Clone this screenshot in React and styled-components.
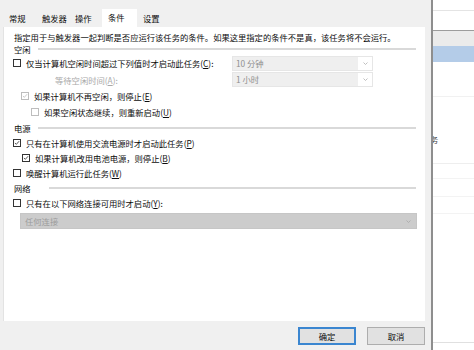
import styled, { createGlobalStyle } from 'styled-components'

const GlobalStyle = createGlobalStyle`
  html, body {
    margin: 0;
    padding: 0;
    background: #ffffff;
  }
  body {
    font-family: "Noto Sans CJK SC", "Noto Sans", sans-serif;
    font-size: 8.3px;
    color: #0c0c0c;
  }
`

const Check = ({ checked, disabled }) => (
    <Box $disabled={disabled}>
        {checked && (
            <svg width="8" height="8" viewBox="0 0 8 8">
                <polyline points="1.2,3.9 3.1,5.8 6.8,1.6" fill="none"
                    stroke={disabled ? '#b8b8b8' : '#222'} strokeWidth="1" />
            </svg>
        )}
    </Box>
)

const Chevron = ({ color = '#b0b0b0' }) => (
    <svg width="5" height="3" viewBox="0 0 5 3">
        <polyline points="0.5,0.5 2.5,2.5 4.5,0.5" fill="none" stroke={color} strokeWidth="0.8" />
    </svg>
)

const Key = ({ k }) => <>(<u>{k}</u>)</>

const App = () => {
    const tabs = [
        { label: '常规', w: 33 },
        { label: '触发器', w: 33 },
        { label: '操作', w: 33 },
        { label: '条件', w: 35, active: true },
        { label: '设置', w: 40 },
    ]

    return (
        <>
            <GlobalStyle />
            <Page>
                <Dialog>
                    <TabStrip>
                        {tabs.map(t => (
                            <Tab key={t.label} $w={t.w} $active={t.active}>{t.label}</Tab>
                        ))}
                    </TabStrip>
                    <Panel>
                        <Desc>指定用于与触发器一起判断是否应运行该任务的条件。如果这里指定的条件不是真，该任务将不会运行。</Desc>

                        <Section $h={12} $gap={7}><span>空闲</span><Rule /></Section>
                        <Row $h={16}>
                            <Check />仅当计算机空闲时间超过下列值时才启动此任务<Key k="C" />:
                            <Select><SelectValue>10 分钟</SelectValue><SelectArrow><Chevron /></SelectArrow></Select>
                        </Row>
                        <Row $h={17}>
                            <WaitLabel>等待空闲时间<Key k="A" />:</WaitLabel>
                            <Select><SelectValue>1 小时</SelectValue><SelectArrow><Chevron /></SelectArrow></Select>
                        </Row>
                        <Row $h={16} $indent={8}>
                            <Check checked disabled />如果计算机不再空闲，则停止<Key k="E" />
                        </Row>
                        <Row $h={16} $indent={18}>
                            <Check disabled />如果空闲状态继续，则重新启动<Key k="U" />
                        </Row>

                        <Section $h={15} $gap={7}><span>电源</span><Rule /></Section>
                        <Row $h={15}>
                            <Check checked />只有在计算机使用交流电源时才启动此任务<Key k="P" />
                        </Row>
                        <Row $h={15} $indent={9}>
                            <Check checked />如果计算机改用电池电源，则停止<Key k="B" />
                        </Row>
                        <Row $h={15}>
                            <Check />唤醒计算机运行此任务<Key k="W" />
                        </Row>

                        <Section $h={15} $gap={18}><span>网络</span><Rule /></Section>
                        <Row $h={15}>
                            <Check />只有在以下网络连接可用时才启动<Key k="Y" />:
                        </Row>
                        <NetCombo>
                            <span>任何连接</span>
                            <Chevron color="#a8a8a8" />
                        </NetCombo>
                    </Panel>
                    <ButtonBar>
                        <Button $primary>确定</Button>
                        <Button>取消</Button>
                    </ButtonBar>
                </Dialog>

                <BgWindow>
                    <BgRow $h={10} $line="#e4e4e4" />
                    <BgRow $h={19} $line="#9c9c9c" />
                    <BgRow $h={15} $bg="#ebebeb" />
                    <BgRow $h={16} $bg="#b4cce8" />
                    <BgRow $h={34} $line="#f1f1f1" />
                    <BgRow $h={33} />
                    <BgRow $h={18}><BgText>务</BgText></BgRow>
                    <BgRow $h={15} $line="#eeeeee" />
                    <BgRow $h={14} $line="#f3f3f3" />
                    <BgRow $h={17} $line="#f3f3f3" />
                    <BgRow $h={16} $line="#f3f3f3" />
                    <BgRow $h={128} $line="#e0e0e0" />
                </BgWindow>
            </Page>
        </>
    )
}

export default App

const Page = styled.div`
    display: flex;
    width: 474px;
    height: 350px;
    overflow: hidden;
`
const Dialog = styled.div`
    width: 431px;
    flex-shrink: 0;
    display: flex;
    flex-direction: column;
    background-color: #f0f0f0;
    border-right: 2px solid #8e8e8e;
`
const TabStrip = styled.div`
    height: 27px;
    display: flex;
    align-items: flex-end;
    padding-left: 3px;
`
const Tab = styled.div`
    width: ${p => p.$w}px;
    height: 18px;
    box-sizing: border-box;
    padding-left: 6px;
    line-height: ${p => (p.$active ? 16 : 19)}px;
    background-color: ${p => (p.$active ? '#ffffff' : 'transparent')};
    white-space: nowrap;
`
const Panel = styled.div`
    flex: 1;
    margin: 0 6px 0 3px;
    padding: 4px 9px 0 8px;
    background-color: #ffffff;
    border-left: 1px solid #e3e3e3;
    display: flex;
    flex-direction: column;
`
const Desc = styled.div`
    height: 12px;
    line-height: 12px;
    padding-left: 2px;
    white-space: nowrap;
`
const Section = styled.div`
    height: ${p => p.$h}px;
    display: flex;
    align-items: center;
    padding-left: 2px;
    gap: ${p => p.$gap}px;
`
const Rule = styled.div`
    flex: 1;
    height: 2px;
    background-color: #d9d9d9;
`
const Row = styled.div`
    height: ${p => p.$h}px;
    display: flex;
    align-items: center;
    padding-left: ${p => (p.$indent || 0) + 1}px;
    white-space: nowrap;

    u {
        text-decoration-thickness: 0.6px;
        text-underline-offset: 1px;
    }
`
const Box = styled.span`
    width: 8px;
    height: 8px;
    box-sizing: border-box;
    margin-right: 5px;
    border: 1px solid ${p => (p.$disabled ? '#bdbdbd' : '#333333')};
    display: flex;
    align-items: center;
    justify-content: center;
    flex-shrink: 0;
`
const WaitLabel = styled.span`
    padding-left: 42px;
    color: #a9a9a9;
`
const Select = styled.div`
    width: 141px;
    height: 15px;
    box-sizing: border-box;
    margin-left: auto;
    margin-right: 43px;
    border: 1px solid #e6e6e6;
    background-color: #ffffff;
    display: flex;
`
const SelectValue = styled.div`
    flex: 1;
    background-color: #efefef;
    color: #8e8e8e;
    padding-left: 3px;
    line-height: 13px;
`
const SelectArrow = styled.div`
    width: 14px;
    display: flex;
    align-items: center;
    justify-content: center;
`
const NetCombo = styled.div`
    height: 16px;
    box-sizing: border-box;
    margin: 3px -1px 0 8px;
    padding: 0 5px 0 4px;
    background-color: #cccccc;
    border: 1px solid #c6c6c6;
    color: #9c9c9c;
    display: flex;
    align-items: center;
    justify-content: space-between;
`
const ButtonBar = styled.div`
    height: 29px;
    box-sizing: border-box;
    display: flex;
    justify-content: flex-end;
    gap: 11px;
    padding: 6px 6px 0 0;
`
const Button = styled.div`
    width: 58px;
    height: 18px;
    box-sizing: border-box;
    border: ${p => (p.$primary ? '2px solid #3b86d0' : '1px solid #adadad')};
    background-color: #e1e1e1;
    display: flex;
    align-items: center;
    justify-content: center;
`
const BgWindow = styled.div`
    flex: 1;
    display: flex;
    flex-direction: column;
    background-color: #ffffff;
    overflow: hidden;
`
const BgRow = styled.div`
    height: ${p => p.$h}px;
    flex-shrink: 0;
    background-color: ${p => p.$bg || '#ffffff'};
    border-bottom: ${p => (p.$line ? `1px solid ${p.$line}` : 'none')};
    display: flex;
    align-items: center;
`
const BgText = styled.span`
    margin-left: -3px;
    color: #444;
`
